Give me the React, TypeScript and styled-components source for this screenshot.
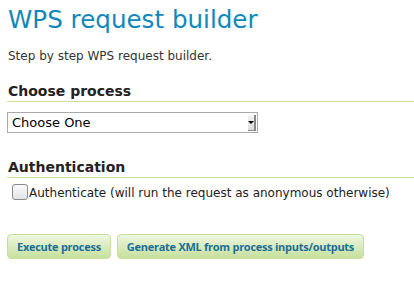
import React from "react";
import styled, { createGlobalStyle } from "styled-components";

const Global = createGlobalStyle`
  html, body { margin: 0; padding: 0; background: #fff; }
  body { font-family: "DejaVu Sans", Verdana, sans-serif; color: #333; }
`;

const Page = styled.div`
  padding: 0 0 0 7px;
  display: flex;
  flex-direction: column;
`;

const Title = styled.h1`
  margin: 4px 0 0 1px;
  font-size: 24.6px;
  font-weight: normal;
  color: #1188bb;
  line-height: 32px;
`;

const Lead = styled.p`
  margin: 12px 0 0 1px;
  font-size: 12px;
  line-height: 16px;
  color: #333;
`;

const Section = styled.h2<{ $top: number }>`
  margin: ${(p) => p.$top}px 0 0 0;
  padding: 0 0 1px 1px;
  font-size: 14px;
  font-weight: bold;
  color: #222;
  line-height: 18px;
  border-bottom: 1px solid #c8e09c;
`;

const SelectBox = styled.div`
  margin-top: 10px;
  width: 251px;
  height: 21px;
  box-sizing: border-box;
  border: 1px solid #aaa;
  display: flex;
  align-items: center;
  justify-content: space-between;
  background: #fff;
`;

const SelectText = styled.span`
  font-size: 13px;
  color: #000;
  padding-left: 4px;
`;

const Arrow = styled.span`
  width: 6px;
  height: 15px;
  margin-right: 1px;
  background: linear-gradient(#f4f4f4, #ddd);
  border-right: 2px solid #888;
  border-bottom: 1px solid #888;
  display: flex;
  align-items: center;
  justify-content: center;
  &::after {
    content: "";
    border-left: 3px solid transparent;
    border-right: 3px solid transparent;
    border-top: 3px solid #000;
  }
`;

const CheckRow = styled.label`
  margin-top: 7px;
  display: flex;
  align-items: flex-start;
  gap: 1px;
  font-size: 12px;
  color: #222;
  line-height: 16px;
`;

const Box = styled.span`
  margin: 0 0 0 5px;
  width: 13px;
  height: 13px;
  border: 1px solid #8a8a8a;
  border-radius: 3px;
  background: linear-gradient(#fafafa, #e4e4e4);
  flex: none;
  position: relative;
  top: -1px;
  width: 14px;
  height: 14px;
`;

const Buttons = styled.div`
  margin-top: 33px;
  display: flex;
  gap: 6px;
`;

const Button = styled.button`
  height: 25px;
  padding: 0 9px;
  border: 1px solid #c6df9e;
  border-radius: 4px;
  background: linear-gradient(#eef6df, #c6e09c);
  color: #1a6e99;
  font-family: "Open Sans", "DejaVu Sans", sans-serif;
  font-size: 11px;
  font-weight: bold;
  letter-spacing: -0.27px;
  cursor: pointer;
`;

export default function App() {
  return (
    <>
      <Global />
      <Page>
        <Title>WPS request builder</Title>
        <Lead>Step by step WPS request builder.</Lead>
        <Section $top={18}>Choose process</Section>
        <SelectBox>
          <SelectText>Choose One</SelectText>
          <Arrow />
        </SelectBox>
        <Section $top={25}>Authentication</Section>
        <CheckRow>
          <Box />
          Authenticate (will run the request as anonymous otherwise)
        </CheckRow>
        <Buttons>
          <Button>Execute process</Button>
          <Button>Generate XML from process inputs/outputs</Button>
        </Buttons>
      </Page>
    </>
  );
}
